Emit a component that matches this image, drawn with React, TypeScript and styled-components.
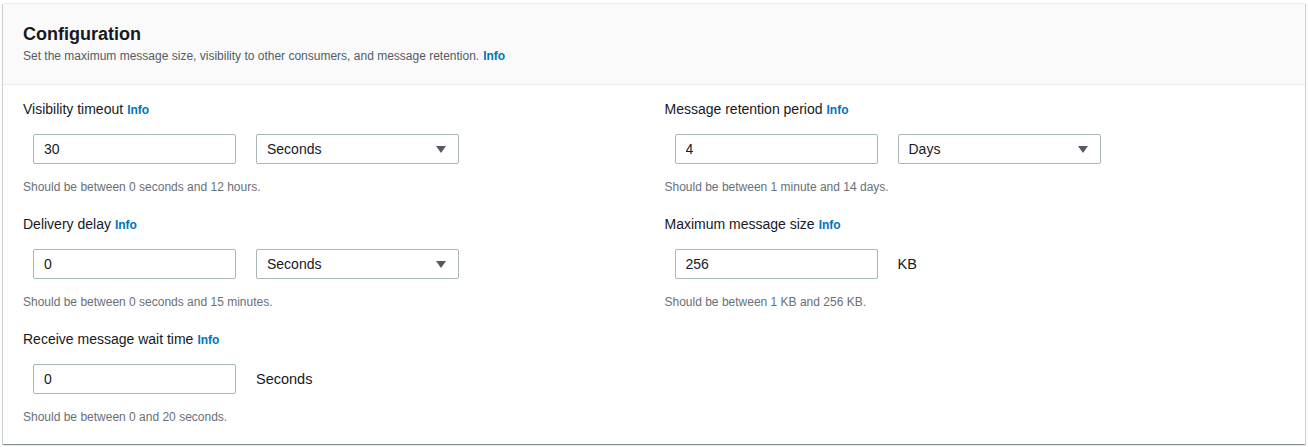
import React from 'react';
import styled, { createGlobalStyle } from 'styled-components';

const GlobalStyle = createGlobalStyle`
	html, body {
		margin: 0;
		padding: 0;
		background: #ffffff;
		font-family: 'Liberation Sans', Arial, sans-serif;
		color: #16191f;
	}
	#root {
		padding: 3px 3px 4px 3px;
	}
`;

const Card = styled.section`
	width: 1302px;
	box-sizing: border-box;
	background: #ffffff;
	border-top: 1px solid #eaeded;
	box-shadow: 0 1px 1px 0 rgba(0, 28, 36, 0.3), 1px 1px 1px 0 rgba(0, 28, 36, 0.15),
		-1px 1px 1px 0 rgba(0, 28, 36, 0.15);
`;

const Header = styled.header`
	background: #fafafa;
	border-bottom: 1px solid #eaeded;
	padding: 19px 20px 20px 20px;
`;

const Title = styled.h2`
	margin: 0;
	font-size: 18px;
	line-height: 22px;
	font-weight: 700;
	color: #16191f;
`;

const Description = styled.p`
	margin: 3px 0 0;
	font-size: 12px;
	line-height: 16px;
	color: #545b64;
`;

const Info = styled.a`
	margin-left: 4px;
	font-size: 12px;
	font-weight: 700;
	color: #0073bb;
	text-decoration: none;
	cursor: pointer;
`;

const Body = styled.div`
	display: grid;
	grid-template-columns: 1fr 1fr;
	column-gap: 24px;
	padding: 13px 23px 19px 20px;
`;

const Column = styled.div`
	display: flex;
	flex-direction: column;
	gap: 18px;
`;

const Field = styled.div`
	display: flex;
	flex-direction: column;
`;

const Label = styled.label`
	font-size: 14px;
	line-height: 22px;
	color: #16191f;
`;

const Controls = styled.div`
	display: flex;
	align-items: center;
	gap: 20px;
	margin: 13px 0 15px 10px;
`;

const Input = styled.input`
	width: 203px;
	height: 30px;
	box-sizing: border-box;
	border: 1px solid #aab7b8;
	border-radius: 2px;
	padding: 0 10px;
	font-family: inherit;
	font-size: 14px;
	color: #16191f;
	background: #ffffff;
	outline: none;
`;

const Select = styled.div`
	width: 203px;
	height: 30px;
	box-sizing: border-box;
	border: 1px solid #aab7b8;
	border-radius: 2px;
	padding: 0 12px 0 10px;
	display: flex;
	align-items: center;
	justify-content: space-between;
	font-size: 14px;
	color: #16191f;
	background: #ffffff;
	cursor: pointer;
`;

const Unit = styled.span`
	font-size: 14.5px;
	color: #16191f;
`;

const Hint = styled.div`
	font-size: 12px;
	line-height: 16px;
	color: #687078;
`;

const Caret = () => (
	<svg width="10" height="7" viewBox="0 0 10 7" aria-hidden>
		<path d="M0 0h10L5 7z" fill="#545b64" />
	</svg>
);

type FieldProps = {
	label: string;
	value: string;
	hint: string;
	select?: string;
	unit?: string;
};

const ConfigField = ({ label, value, hint, select, unit }: FieldProps) => (
	<Field>
		<Label>
			{label}
			<Info>Info</Info>
		</Label>
		<Controls>
			<Input defaultValue={value} />
			{select && (
				<Select>
					<span>{select}</span>
					<Caret />
				</Select>
			)}
			{unit && <Unit>{unit}</Unit>}
		</Controls>
		<Hint>{hint}</Hint>
	</Field>
);

const App = () => {
	return (
		<>
			<GlobalStyle />
			<Card>
				<Header>
					<Title>Configuration</Title>
					<Description>
						Set the maximum message size, visibility to other consumers, and message retention.
						<Info>Info</Info>
					</Description>
				</Header>
				<Body>
					<Column>
						<ConfigField
							label="Visibility timeout"
							value="30"
							select="Seconds"
							hint="Should be between 0 seconds and 12 hours."
						/>
						<ConfigField
							label="Delivery delay"
							value="0"
							select="Seconds"
							hint="Should be between 0 seconds and 15 minutes."
						/>
						<ConfigField
							label="Receive message wait time"
							value="0"
							unit="Seconds"
							hint="Should be between 0 and 20 seconds."
						/>
					</Column>
					<Column>
						<ConfigField
							label="Message retention period"
							value="4"
							select="Days"
							hint="Should be between 1 minute and 14 days."
						/>
						<ConfigField
							label="Maximum message size"
							value="256"
							unit="KB"
							hint="Should be between 1 KB and 256 KB."
						/>
					</Column>
				</Body>
			</Card>
		</>
	);
};

export default App;
